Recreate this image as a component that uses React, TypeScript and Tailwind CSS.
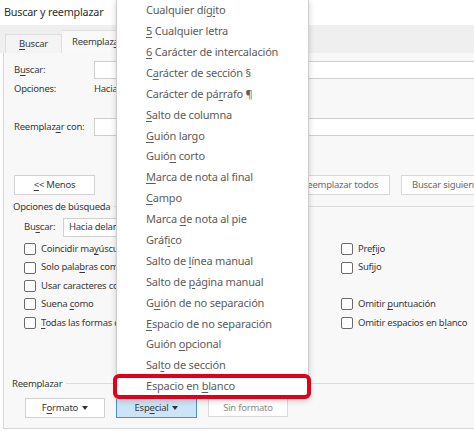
import * as React from "react";

const menuItems: [string, number][] = [
    ["Cualquier dígito", 13],
    ["5 Cualquier letra", 0],
    ["6 Carácter de intercalación", 0],
    ["Carácter de sección §", 1],
    ["Carácter de párrafo ¶", 14],
    ["Salto de columna", 0],
    ["Guión largo", 0],
    ["Guión corto", 4],
    ["Marca de nota al final", 0],
    ["Campo", 0],
    ["Marca de nota al pie", 6],
    ["Gráfico", 4],
    ["Salto de línea manual", 9],
    ["Salto de página manual", 9],
    ["Guión de no separación", 1],
    ["Espacio de no separación", 0],
    ["Guión opcional", 6],
    ["Salto de sección", 3],
    ["Espacio en blanco", 11],
];

// underline one letter (access key)
function Key({ text, at }: { text: string; at: number }) {
    if (at < 0) return <span>{text}</span>;
    return (
        <span className="whitespace-pre">
            {text.slice(0, at)}
            <span className="underline underline-offset-[1.5px]">{text[at]}</span>
            {text.slice(at + 1)}
        </span>
    );
}

function Check({ label, at }: { label: string; at: number }) {
    return (
        <div className="flex items-center h-[18.4px] whitespace-nowrap">
            <span className="w-[12px] h-[12px] border border-[#6b6b6b] rounded-[2px] bg-white mr-[5px] shrink-0" />
            <Key text={label} at={at} />
        </div>
    );
}

function Caret() {
    return (
        <svg width="6" height="4" viewBox="0 0 6 4" className="ml-[4px]">
            <path d="M0 0h6L3 4z" fill="#333" />
        </svg>
    );
}

export default function App() {
    return (
        <div
            className="relative w-[474px] h-[436px] overflow-hidden bg-white text-[#3a3a3a] text-[9.5px] tracking-[-0.25px]"
            style={{ fontFamily: '"Noto Sans", "Open Sans", sans-serif' }}
        >
            <div className="h-[25px] flex items-center pl-[4px] text-[10.8px] tracking-[-0.2px] text-[#2e2e2e]">
                Buscar y reemplazar
            </div>

            <div className="h-[28px] bg-[#efefef] flex items-end pl-[5px]">
                <div className="h-[19px] w-[57px] border border-b-0 border-[#dedede] bg-[#f4f4f4] flex items-center justify-center">
                    <Key text="Buscar" at={0} />
                </div>
                <div className="h-[23px] w-[90px] bg-[#f9f9f9] border-t border-r border-[#dedede] flex items-center pl-[10px]">
                    <Key text="Reemplazar" at={8} />
                </div>
            </div>

            <div className="ml-[3px] h-[376px] border-l border-b border-[#d6d6d6] bg-[#f8f8f8] flex flex-col whitespace-nowrap">
                <div className="mt-[8px] h-[18px] flex items-center">
                    <div className="w-[90px] pl-[10px]">
                        <Key text="Buscar:" at={1} />
                    </div>
                    <div className="flex-1 h-[18px] bg-white border border-r-0 border-[#cfcfcf]" />
                </div>
                <div className="mt-[1px] h-[18px] flex items-center">
                    <div className="w-[90px] pl-[10px]">Opciones:</div>
                    <div>Hacia delante</div>
                </div>
                <div className="mt-[20px] h-[18px] flex items-center">
                    <div className="w-[90px] pl-[10px]">
                        <Key text="Reemplazar con:" at={8} />
                    </div>
                    <div className="flex-1 h-[18px] bg-white border border-r-0 border-[#cfcfcf]" />
                </div>

                <div className="mt-[39px] h-[20px] flex items-center">
                    <div className="ml-[10px] w-[81px] h-[20px] shrink-0 bg-white border border-[#d2d2d2] flex items-center justify-center">
                        <Key text="<< Menos" at={0} />
                    </div>
                    <div className="ml-[195px] w-[100px] h-[20px] shrink-0 bg-white border border-[#d8d8d8] flex items-center justify-center text-[#6a6a6a]">
                        Reemplazar todos
                    </div>
                    <div className="ml-[11px] w-[95px] h-[20px] shrink-0 bg-white border border-[#d8d8d8] flex items-center pl-[10px] text-[#6a6a6a]">
                        Buscar siguiente
                    </div>
                </div>

                <div className="mt-[4px] h-[16px] flex items-center pl-[9px]">
                    <span>Opciones de búsqueda</span>
                    <div className="flex-1 ml-[4px] border-t border-[#dcdcdc] -translate-y-[1px]" />
                </div>

                <div className="mt-[3px] h-[19px] flex items-center pl-[20px]">
                    <div className="w-[39px]">
                        <Key text="Buscar:" at={2} />
                    </div>
                    <div className="w-[100px] h-[19px] bg-white border border-[#cfcfcf] flex items-center pl-[5px]">
                        Hacia delante
                    </div>
                </div>

                <div className="mt-[3px] grid grid-cols-[317px_1fr] pl-[20px]">
                    <div className="flex flex-col">
                        <Check label="Coincidir mayúsculas y minúsculas" at={12} />
                        <Check label="Solo palabras completas" at={9} />
                        <Check label="Usar caracteres comodín" at={-1} />
                        <Check label="Suena como" at={6} />
                        <Check label="Todas las formas de la palabra" at={0} />
                    </div>
                    <div className="flex flex-col">
                        <Check label="Prefijo" at={3} />
                        <Check label="Sufijo" at={3} />
                        <div className="h-[18.4px]" />
                        <Check label="Omitir puntuación" at={7} />
                        <Check label="Omitir espacios en blanco" at={20} />
                    </div>
                </div>

                <div className="mt-[44px] h-[16px] flex items-center pl-[8px]">
                    <span>Reemplazar</span>
                    <div className="flex-1 ml-[4px] border-t border-[#dcdcdc]" />
                </div>

                <div className="mt-[6px] h-[20px] flex items-center pl-[21px]">
                    <div className="w-[80px] h-[20px] bg-white border border-[#d2d2d2] flex items-center justify-center">
                        <Key text="Formato" at={1} />
                        <Caret />
                    </div>
                    <div className="ml-[11px] w-[81px] h-[20px] bg-[#cce4f7] border border-[#4a8fd0] flex items-center justify-center">
                        <Key text="Especial" at={3} />
                        <Caret />
                    </div>
                    <div className="ml-[11px] w-[80px] h-[19px] bg-white border border-[#dadada] flex items-center justify-center text-[#8a8a8a]">
                        Sin formato
                    </div>
                </div>
            </div>

            {/* Especial dropdown menu */}
            <div className="absolute left-[116px] top-[-1px] w-[193px] bg-white border border-[#cdcdcd] shadow-[0_2px_6px_rgba(0,0,0,0.18)] pb-[1px]">
                {menuItems.map(([text, at], i) => (
                    <div
                        key={i}
                        className="h-[20.9px] flex items-center pl-[29px] text-[11px] tracking-[-0.2px] text-[#5c5c5c] whitespace-nowrap"
                    >
                        <Key text={text} at={at} />
                    </div>
                ))}
            </div>

            {/* highlight box */}
            <div className="absolute left-[113px] top-[374px] w-[198px] h-[25px] border-[4px] border-[#e1001a] rounded-[6px]" />
        </div>
    );
}
